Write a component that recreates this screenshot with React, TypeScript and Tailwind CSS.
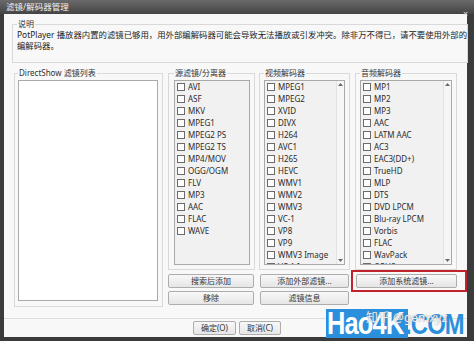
import React from "react";

const FONT = '"Noto Sans","Noto Sans CJK SC",sans-serif';

function Check({ label }: { label: string }) {
  return (
    <div className="flex items-center h-[12px] pl-[2px] whitespace-nowrap">
      <span className="w-[8px] h-[8px] border border-[#6b6b6b] bg-white shrink-0" />
      <span className="ml-[3px] text-[8px] leading-none text-[#2b2b2b]">{label}</span>
    </div>
  );
}

function Group({
  title,
  className,
  children,
}: {
  title: string;
  className?: string;
  children: React.ReactNode;
}) {
  return (
    <fieldset className={`border border-[#d9d9d9] ${className ?? ""}`}>
      <legend className="px-[1px] text-[8px] leading-[10px] text-[#333] whitespace-nowrap">{title}</legend>
      {children}
    </fieldset>
  );
}

function Btn({ children, className }: { children: React.ReactNode; className?: string }) {
  return (
    <button
      type="button"
      className={`h-[14px] flex items-center justify-center border border-[#adadad] rounded-[2px] bg-linear-to-b from-[#f8f8f8] to-[#e6e6e6] text-[8px] leading-none text-[#333] whitespace-nowrap ${className ?? ""}`}
    >
      {children}
    </button>
  );
}

function CheckList({ items, scroll }: { items: string[]; scroll?: boolean }) {
  return (
    <div className="mt-[2px] h-[185px] border border-[#a9a9a9] bg-[#f1f1f1] flex overflow-hidden">
      <div className="flex-1 overflow-hidden">
        {items.map((it) => (
          <Check key={it} label={it} />
        ))}
      </div>
      {scroll && (
        <div className="w-[8px] border-l border-[#e2e2e2] bg-[#f6f6f6] flex flex-col items-center justify-between py-[2px]">
          <svg width="5" height="3" viewBox="0 0 5 3">
            <path d="M0 3 L2.5 0 L5 3 Z" fill="#6a6a6a" />
          </svg>
          <svg width="5" height="3" viewBox="0 0 5 3">
            <path d="M0 0 L2.5 3 L5 0 Z" fill="#6a6a6a" />
          </svg>
        </div>
      )}
    </div>
  );
}

const source = ["AVI", "ASF", "MKV", "MPEG1", "MPEG2 PS", "MPEG2 TS", "MP4/MOV", "OGG/OGM", "FLV", "MP3", "AAC", "FLAC", "WAVE"];
const video = ["MPEG1", "MPEG2", "XVID", "DIVX", "H264", "AVC1", "H265", "HEVC", "WMV1", "WMV2", "WMV3", "VC-1", "VP8", "VP9", "WMV3 Image", "VC-1 Image"];
const audio = ["MP1", "MP2", "MP3", "AAC", "LATM AAC", "AC3", "EAC3(DD+)", "TrueHD", "MLP", "DTS", "DVD LPCM", "Blu-ray LPCM", "Vorbis", "FLAC", "WavPack", "OPUS"];

export default function App() {
  return (
    <div
      className="relative w-[474px] h-[341px] bg-[#3b3b3b] flex flex-col overflow-hidden"
      style={{ fontFamily: FONT }}
    >
      {/* title bar */}
      <div className="h-[14px] shrink-0 flex items-center pl-[6px] bg-linear-to-b from-[#6a6a6a] to-[#444444]">
        <span className="text-[8.5px] leading-none text-[#f2f2f2]">滤镜/解码器管理</span>
      </div>
      <span className="absolute left-[463px] top-[9px] text-[9px] leading-none text-[#e0e0e0]">×</span>

      {/* body */}
      <div className="flex-1 ml-[4px] mr-[7px] mb-[4px] bg-[#f8f8f8] flex flex-col">
        <Group title="说明" className="mt-[5px] ml-[8px] mr-[10px] pl-[4px] pb-[11px]">
          <div className="text-[8.4px] leading-[11px] text-[#222] whitespace-nowrap">
            PotPlayer 播放器内置的滤镜已够用，用外部编解码器可能会导致无法播放或引发冲突。除非万不得已，请不要使用外部的
          </div>
          <div className="text-[8.4px] leading-[11px] text-[#222] whitespace-nowrap">编解码器。</div>
        </Group>

        <div className="flex mt-[5px] ml-[10px]">
          <Group title="DirectShow 滤镜列表" className="w-[149px] pl-[3px] pr-[4px] pb-[5px]">
            <div className="mt-[2px] h-[221px] border border-[#a9a9a9] bg-white" />
          </Group>

          <div className="w-[87px] ml-[5px] flex flex-col">
            <Group title="源滤镜/分离器" className="pl-[5px] pr-[4px] pb-[4px]">
              <CheckList items={source} />
            </Group>
            <Btn className="mt-[4px] w-[86px]">搜索后添加</Btn>
            <Btn className="mt-[3px] w-[86px]">移除</Btn>
          </div>

          <div className="w-[91px] ml-[4px] flex flex-col">
            <Group title="视频解码器" className="pl-[4px] pr-[4px] pb-[4px]">
              <CheckList items={video} scroll />
            </Group>
            <Btn className="mt-[4px] mx-[1px]">添加外部滤镜...</Btn>
            <Btn className="mt-[3px] mx-[1px]">滤镜信息</Btn>
          </div>

          <div className="w-[102px] ml-[5px] flex flex-col">
            <Group title="音频解码器" className="pl-[4px] pr-[4px] pb-[4px]">
              <CheckList items={audio} scroll />
            </Group>
            <div className="relative mt-[4px] ml-[1px]">
              <Btn className="w-full">添加系统滤镜...</Btn>
              <div className="absolute -left-[5px] -right-[10px] -top-[4px] -bottom-[4px] border-2 border-[#c0232c]" />
            </div>
          </div>
        </div>

        <div className="mt-auto border-t border-[#dcdcdc] flex gap-[3px] pl-[189px] py-[2px]">
          <Btn className="w-[43px]">确定(O)</Btn>
          <Btn className="w-[42px]">取消(C)</Btn>
        </div>
      </div>

      {/* watermark */}
      <div className="absolute left-[326px] top-[309px] w-[82px] h-[29px] bg-[#2a8fdc] flex items-center pl-[1px] overflow-hidden">
        <span
          className="text-[31px] leading-none text-white font-bold origin-left scale-x-[0.82] tracking-[-1px]"
          style={{ fontFamily: '"Liberation Sans",sans-serif' }}
        >
          Hao4K
        </span>
      </div>
      <div className="absolute left-[405px] top-[311px] h-[27px] flex items-center">
        <span
          className="text-[29px] leading-none text-[#2a8fdc] font-bold origin-left scale-x-[0.82] tracking-[-1px]"
          style={{ fontFamily: '"Liberation Sans",sans-serif' }}
        >
          .COM
        </span>
      </div>
      <div
        className="absolute left-[366px] top-[312px] text-[12px] leading-none text-white/85 whitespace-nowrap"
        style={{ textShadow: "0 0 1px #888" }}
      >
        知乎 @gemxyz
      </div>
    </div>
  );
}
